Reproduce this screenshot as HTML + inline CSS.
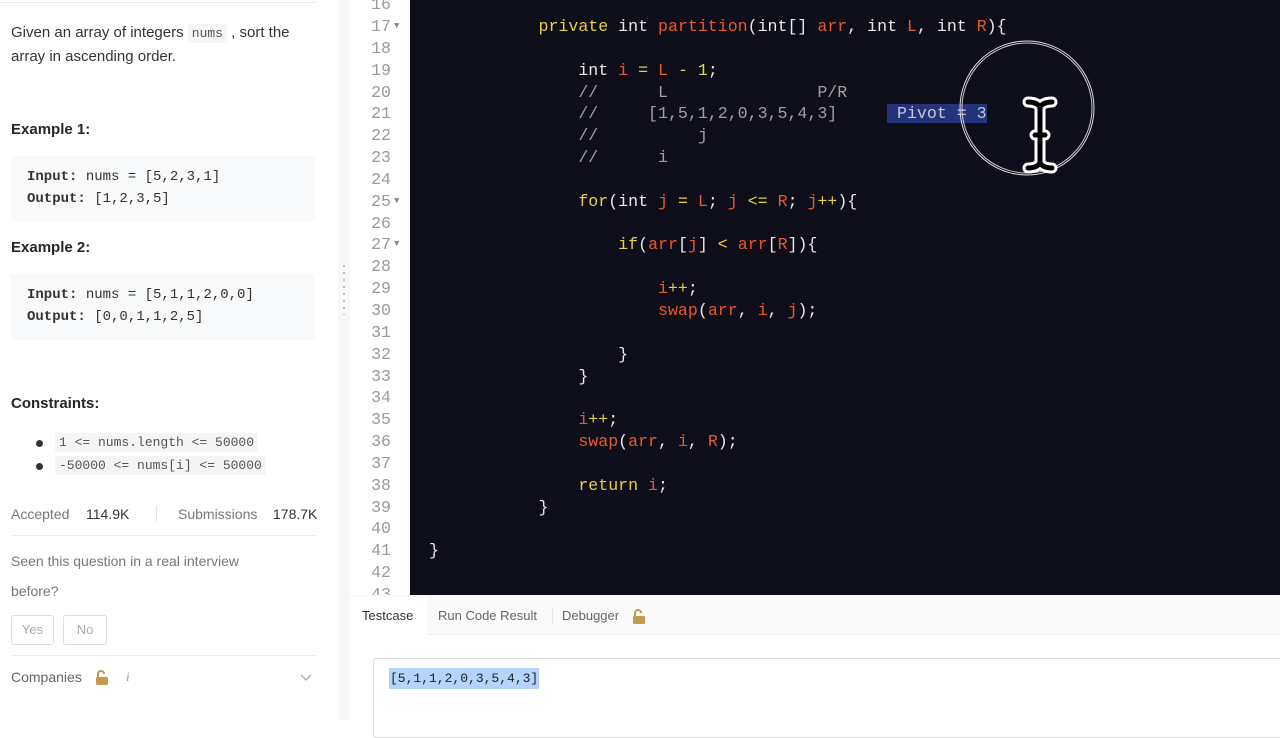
<!DOCTYPE html>
<html><head><meta charset="utf-8"><style>
*{margin:0;padding:0;box-sizing:border-box}
body{width:1280px;height:720px;overflow:hidden;background:#fff;font-family:"Liberation Sans",sans-serif;position:relative;color:#333}
.a{position:absolute;white-space:pre}
.mono{font-family:"Liberation Mono",monospace}
.t{font-size:15px;color:#333}
.code{background:#f7f9fa;position:absolute;left:11px;width:304px}
.cl{font-family:"Liberation Mono",monospace;font-size:14px;color:#333;line-height:22px}
.cl b{font-weight:bold}
.ic{background:#f3f5f7;font-family:"Liberation Mono",monospace;font-size:13px;color:#555;padding:2px 4px}
#ed{position:absolute;left:410px;top:0;width:870px;height:595px;background:#0d0e1a;overflow:hidden}
#gut{position:absolute;left:350px;top:0;width:60px;height:595px;background:#fff;overflow:hidden}
.ln{position:absolute;font-family:"Liberation Mono",monospace;font-size:16.6px;line-height:21.84px;white-space:pre}
.K{color:#e6cf4a}.V{color:#e8582c}.W{color:#e8e8e8}.C{color:#a0a0a0}.N{color:#d6dc62}
</style></head><body>
<div class="a" style="left:0;top:2px;width:316px;height:1px;background:#e8e8e8"></div>
<div class="a t" style="left:11px;top:21px;line-height:23px">Given an array of integers <span class="ic">nums</span> , sort the
array in ascending order.</div>
<div class="a t" style="left:11px;top:121px;font-weight:bold;color:#262626">Example 1:</div>
<div class="code" style="top:156px;height:65px"><div class="cl" style="padding:10px 0 0 16px;white-space:pre"><b>Input:</b> nums = [5,2,3,1]
<b>Output:</b> [1,2,3,5]</div></div>
<div class="a t" style="left:11px;top:239px;font-weight:bold;color:#262626">Example 2:</div>
<div class="code" style="top:274px;height:66px"><div class="cl" style="padding:10px 0 0 16px;white-space:pre"><b>Input:</b> nums = [5,1,1,2,0,0]
<b>Output:</b> [0,0,1,1,2,5]</div></div>
<div class="a t" style="left:11px;top:395px;font-weight:bold;color:#262626">Constraints:</div>
<div class="a" style="left:36px;top:440px;width:7px;height:7px;border-radius:50%;background:#333"></div>
<div class="a" style="left:36px;top:463px;width:7px;height:7px;border-radius:50%;background:#333"></div>
<div class="a ic" style="left:55px;top:433px">1 &lt;= nums.length &lt;= 50000</div>
<div class="a ic" style="left:55px;top:456px">-50000 &lt;= nums[i] &lt;= 50000</div>
<div class="a" style="left:11px;top:506px;font-size:14px;color:#777">Accepted</div>
<div class="a" style="left:86px;top:506px;font-size:14px;color:#333">114.9K</div>
<div class="a" style="left:156px;top:506px;width:1px;height:16px;background:#e5e5e5"></div>
<div class="a" style="left:178px;top:506px;font-size:14px;color:#777">Submissions</div>
<div class="a" style="left:273px;top:506px;font-size:14px;color:#333">178.7K</div>
<div class="a" style="left:11px;top:535px;width:305px;height:1px;background:#eee"></div>
<div class="a" style="left:11px;top:546px;font-size:14px;color:#777;line-height:30px">Seen this question in a real interview
before?</div>
<div class="a" style="left:11px;top:615px;width:43px;height:30px;border:1px solid #ddd;border-radius:3px;color:#aaa;font-size:13px;text-align:center;line-height:28px">Yes</div>
<div class="a" style="left:63px;top:615px;width:44px;height:30px;border:1px solid #ddd;border-radius:3px;color:#aaa;font-size:13px;text-align:center;line-height:28px">No</div>
<div class="a" style="left:11px;top:655px;width:305px;height:1px;background:#eee"></div>
<div class="a" style="left:11px;top:669px;font-size:14px;color:#666">Companies</div>
<svg class="a" style="left:95px;top:670px" width="14" height="15" viewBox="0 0 14 15"><path d="M3 7V4a3 3 0 0 1 6 0" stroke="#c49a4f" stroke-width="2" fill="none"/><rect x="1" y="7" width="12" height="8" rx="1.5" fill="#c49a4f"/></svg>
<div class="a" style="left:126px;top:669px;font-size:13px;color:#999;font-style:italic;font-family:'Liberation Serif',serif">i</div>
<svg class="a" style="left:300px;top:674px" width="12" height="8"><path d="M1 1l5 5 5-5" stroke="#aaa" stroke-width="1.3" fill="none"/></svg>
<div class="a" style="left:338px;top:0;width:12px;height:720px;background:#f7f7f7"></div>
<div class="a" style="left:343px;top:265px;width:2px;height:50px;background:repeating-linear-gradient(#bbb 0 2px,transparent 2px 7px)"></div>

<div id="gut"><div class="ln" style="left:0;top:-5.84px;width:41px;text-align:right;color:#9a9a9a">16
17
18
19
20
21
22
23
24
25
26
27
28
29
30
31
32
33
34
35
36
37
38
39
40
41
42
43</div>
<div class="ln" style="left:44px;top:-5.84px;font-size:9px;color:#888">
▼







▼

▼</div></div>

<div id="ed"><div class="ln W" style="left:9px;top:-5.84px">
            <span class="K">private</span> int <span class="V">partition</span>(int[] <span class="V">arr</span>, int <span class="V">L</span>, int <span class="V">R</span>){

                int <span class="V">i</span> <span class="K">=</span> <span class="V">L</span> <span class="K">-</span> <span class="N">1</span>;
<span class="C">                //      L               P/R</span>
<span class="C">                //     [1,5,1,2,0,3,5,4,3]     <span style="background:#23347d;color:#c8c8d8"> Pivot = 3</span></span>
<span class="C">                //          j</span>
<span class="C">                //      i</span>

                <span class="K">for</span>(int <span class="V">j</span> <span class="K">=</span> <span class="V">L</span>; <span class="V">j</span> <span class="K">&lt;=</span> <span class="V">R</span>; <span class="V">j</span><span class="K">++</span>){

                    <span class="K">if</span>(<span class="V">arr</span>[<span class="V">j</span>] <span class="K">&lt;</span> <span class="V">arr</span>[<span class="V">R</span>]){

                        <span class="V">i</span><span class="K">++</span>;
                        <span class="V">swap</span>(<span class="V">arr</span>, <span class="V">i</span>, <span class="V">j</span>);

                    }
                }

                <span class="V">i</span><span class="K">++</span>;
                <span class="V">swap</span>(<span class="V">arr</span>, <span class="V">i</span>, <span class="V">R</span>);

                <span class="K">return</span> <span class="V">i</span>;
            }

 }</div>
<svg class="a" style="left:545px;top:38px" width="140" height="140"><circle cx="72" cy="70" r="67" fill="none" stroke="#ddd" stroke-width="1"/><circle cx="72" cy="70" r="65" fill="none" stroke="#ccc" stroke-width="1"/>
<path d="M85 68V126M73 64c6 0 10 2 12 5c2-3 6-5 12-5M73 130c6 0 10-2 12-5c2 3 6 5 12 5M80 97h10" stroke="#fff" stroke-width="11" fill="none" stroke-linecap="round" stroke-linejoin="round"/>
<path d="M85 68V126M73 64c6 0 10 2 12 5c2-3 6-5 12-5M73 130c6 0 10-2 12-5c2 3 6 5 12 5M80 97h10" stroke="#000" stroke-width="5" fill="none" stroke-linecap="round" stroke-linejoin="round"/></svg>
</div>

<div class="a" style="left:350px;top:595px;width:930px;height:40px;background:#fafafa;border-bottom:1px solid #eee"></div>
<div class="a" style="left:350px;top:597px;width:77px;height:40px;background:#fff"></div>
<div class="a" style="left:362px;top:608px;font-size:13px;color:#333">Testcase</div>
<div class="a" style="left:438px;top:608px;font-size:13px;color:#666">Run Code Result</div>
<div class="a" style="left:552px;top:607px;width:1px;height:18px;background:#e5e5e5"></div>
<div class="a" style="left:562px;top:608px;font-size:13px;color:#666">Debugger</div>
<svg class="a" style="left:632px;top:609px" width="14" height="15" viewBox="0 0 14 15"><path d="M3 7V4a3 3 0 0 1 6 0" stroke="#c49a4f" stroke-width="2" fill="none"/><rect x="1" y="7" width="12" height="8" rx="1.5" fill="#c49a4f"/></svg>
<div class="a" style="left:373px;top:658px;width:920px;height:80px;border:1px solid #ddd;border-radius:3px"></div>
<div class="a mono" style="left:389px;top:668px;height:21px;background:#b3d4fd;font-size:13px;line-height:21px;color:#222;padding:0 1px">[5,1,1,2,0,3,5,4,3]</div>
</body></html>
